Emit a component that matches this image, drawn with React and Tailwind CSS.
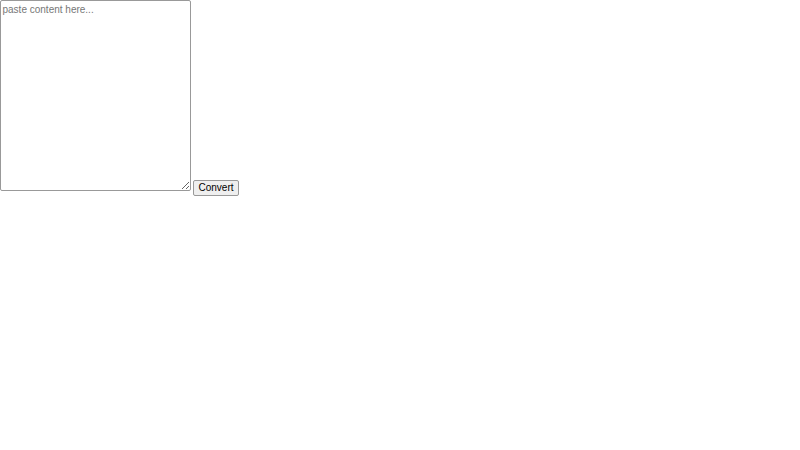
export default function App() {
  return (
    <div className="font-['Liberation_Sans',Arial,sans-serif] text-[10px] leading-normal">
      <textarea
        placeholder="paste content here..."
        className="inline-block align-baseline w-[191px] h-[191px] border border-[#999999] rounded-[2px] px-[1.5px] py-[1px] text-[10px] leading-normal font-['Liberation_Sans',Arial,sans-serif] text-black placeholder:text-[#777777] resize bg-white outline-none"
      />
      <button className="inline-block align-baseline ml-[2px] px-[4.5px] py-[1.5px] border border-[#999999] rounded-[2px] bg-[#efefef] text-black text-[10px] leading-[normal] font-['Liberation_Sans',Arial,sans-serif]">
        Convert
      </button>
    </div>
  );
}
